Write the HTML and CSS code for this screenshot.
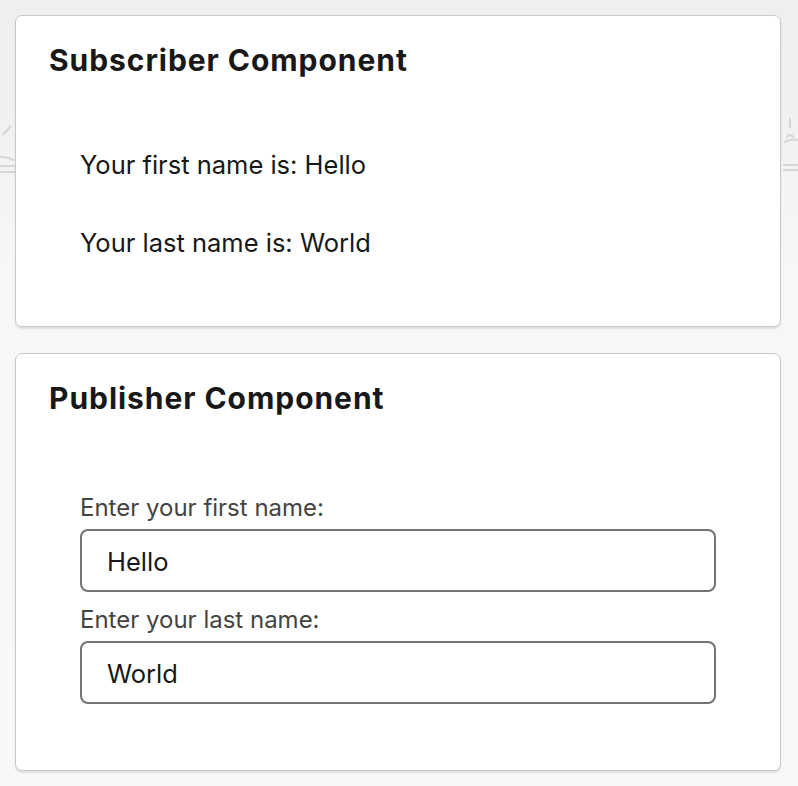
FILE: index.html
```html
<!DOCTYPE html>
<html lang="en">
<head>
<meta charset="utf-8">
<title>Components</title>
<link rel="stylesheet" href="styles.css">
</head>
<body>
<svg class="backdrop" width="798" height="200" viewBox="0 0 798 200" aria-hidden="true">
  <g fill="none" stroke="#d6d6d6" stroke-width="2">
    <path d="M3 135 L11 126"/>
    <path d="M-14 160 A 28 22 0 0 1 14 160"/>
    <path d="M-10 166 H15 M-10 172 H15"/>
    <path d="M790 118 V128"/>
    <path d="M787 138 A 3 3 0 0 1 793 138"/>
    <path d="M784 142 A 20 10 0 0 1 810 142"/>
    <path d="M783 165 H810 M783 170 H810"/>
  </g>
</svg>
<main class="page">
  <section class="card">
    <header class="card-header">
      <h2 class="card-title">Subscriber Component</h2>
    </header>
    <div class="card-body sub-body">
      <p class="line">Your first name is: Hello</p>
      <p class="line">Your last name is: World</p>
    </div>
  </section>
  <section class="card">
    <header class="card-header">
      <h2 class="card-title">Publisher Component</h2>
    </header>
    <div class="card-body pub-body">
      <label class="field">
        <span class="field-label">Enter your first name:</span>
        <input class="field-input" type="text" value="Hello">
      </label>
      <label class="field">
        <span class="field-label">Enter your last name:</span>
        <input class="field-input" type="text" value="World">
      </label>
    </div>
  </section>
</main>
</body>
</html>
```
FILE: styles.css
```css
html, body {
  margin: 0;
  padding: 0;
}
body {
  width: 798px;
  height: 786px;
  overflow: hidden;
  position: relative;
  font-family: Inter, "Noto Sans", "Liberation Sans", sans-serif;
  color: #181818;
  background: linear-gradient(to bottom, #efefef 0px, #f1f1f1 120px, #f7f7f7 260px, #f8f8f8 100%);
}
.backdrop {
  position: absolute;
  left: 0;
  top: 0;
  z-index: 0;
}
.page {
  position: relative;
  z-index: 1;
  display: flex;
  flex-direction: column;
  gap: 26px;
  padding: 15px 17px 0 15px;
}
.card {
  background: #fff;
  border: 1px solid #c9c9c9;
  border-radius: 7px;
  box-shadow: 0 2px 2px rgba(0, 0, 0, 0.1);
  display: flex;
  flex-direction: column;
}
.card-header {
  padding: 26px 32px 0 33px;
}
.card-title {
  margin: 0;
  font-size: 30px;
  line-height: 36px;
  font-weight: 700;
  color: #181818;
  letter-spacing: 0.95px;
}
.card-body {
  padding-left: 64px;
}
.sub-body {
  padding-top: 71px;
  padding-bottom: 67px;
  display: flex;
  flex-direction: column;
  gap: 46px;
}
.line {
  margin: 0;
  font-size: 25.5px;
  line-height: 32px;
  color: #181818;
}
.pub-body {
  padding-top: 77px;
  padding-bottom: 66px;
  display: flex;
  flex-direction: column;
  gap: 13px;
}
.field {
  display: flex;
  flex-direction: column;
  gap: 6px;
}
.field-label {
  font-size: 24px;
  line-height: 30px;
  color: #444444;
}
.field-input {
  box-sizing: border-box;
  width: 636px;
  height: 63px;
  margin: 0;
  border: 2px solid #747474;
  border-radius: 8px;
  padding: 1px 25px 0;
  font-family: Inter, "Noto Sans", "Liberation Sans", sans-serif;
  font-size: 25.5px;
  color: #181818;
  background: #fff;
  outline: none;
}
```
